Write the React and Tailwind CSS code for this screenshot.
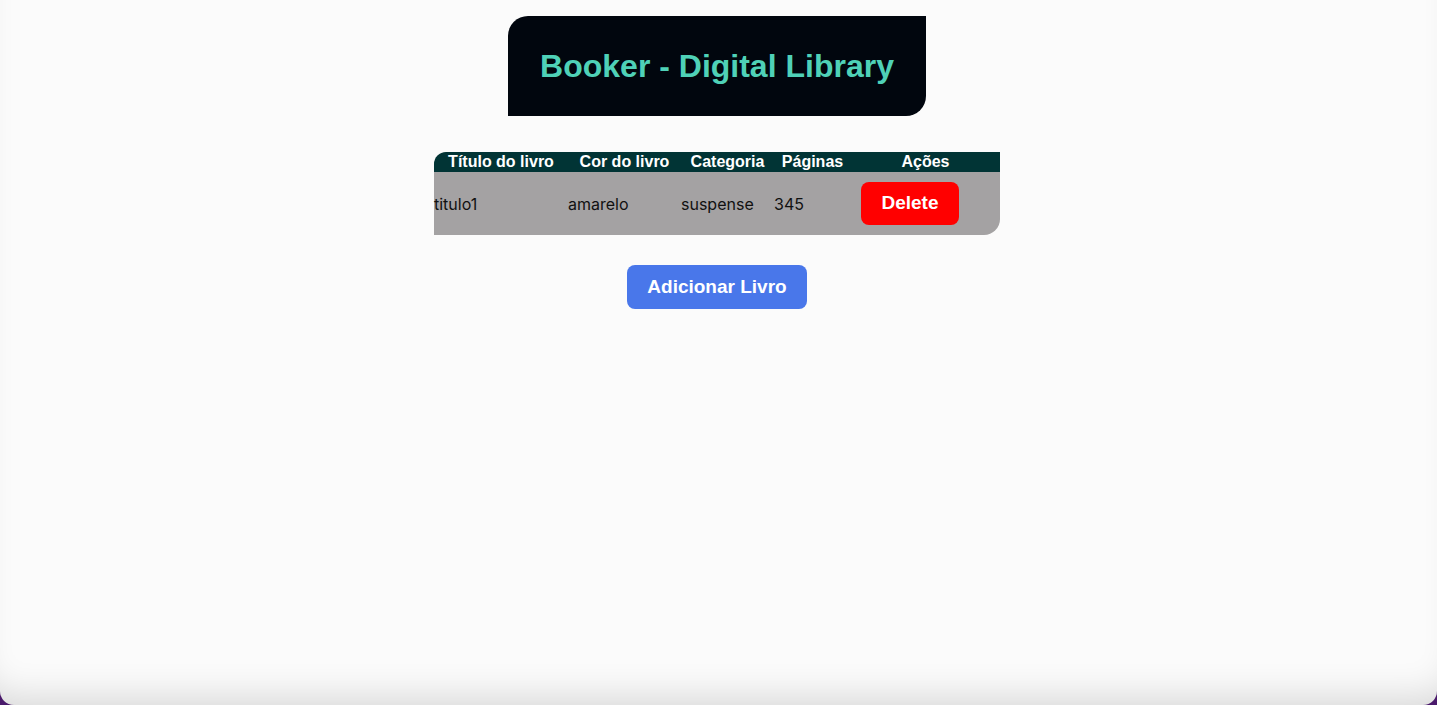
import React from "react";

const books = [
  { titulo: "titulo1", cor: "amarelo", categoria: "suspense", paginas: 345 },
];

const App = () => {
  return (
    <div className="bg-[#4a1a6b] h-[705px] w-full overflow-hidden">
      <div className="h-[705px] w-full bg-[#fbfbfb] rounded-b-[14px] shadow-[inset_0_-30px_36px_-22px_rgba(0,0,0,0.14)] flex flex-col items-center pt-4 pr-[3px]">
        <div className="w-[418px] h-[100px] bg-[#01060e] rounded-tl-[20px] rounded-br-[20px] flex items-center justify-center">
          <h1 className="text-[32px] font-bold text-[#4fd1b7] font-['Liberation_Sans',Arial,sans-serif]">
            Booker - Digital Library
          </h1>
        </div>

        <table className="mt-9 w-[566px] table-fixed border-collapse">
          <thead>
            <tr className="h-5 text-white font-bold text-base leading-5 font-['Liberation_Sans',Arial,sans-serif]">
              <th className="w-[134px] p-0 bg-[#013435] rounded-tl-[12px]">Título do livro</th>
              <th className="w-[113px] p-0 bg-[#013435]">Cor do livro</th>
              <th className="w-[93px] p-0 bg-[#013435]">Categoria</th>
              <th className="w-[77px] p-0 bg-[#013435]">Páginas</th>
              <th className="w-[149px] p-0 bg-[#013435]">Ações</th>
            </tr>
          </thead>
          <tbody>
            {books.map((b) => (
              <tr key={b.titulo} className="text-base text-[#111] font-['Inter',sans-serif]">
                <td className="p-0 bg-[#a4a2a3]">{b.titulo}</td>
                <td className="p-0 bg-[#a4a2a3]">{b.cor}</td>
                <td className="p-0 bg-[#a4a2a3]">{b.categoria}</td>
                <td className="p-0 bg-[#a4a2a3]">{b.paginas}</td>
                <td className="p-0 py-[10px] pl-[10px] bg-[#a4a2a3] rounded-br-[16px]">
                  <button className="w-[98px] h-[43px] bg-[#ff0000] rounded-lg text-white font-bold text-[19px] font-['Liberation_Sans',Arial,sans-serif]">
                    Delete
                  </button>
                </td>
              </tr>
            ))}
          </tbody>
        </table>

        <button className="mt-[30px] w-[180px] h-[44px] bg-[#4977ea] rounded-lg text-white font-bold text-[19px] font-['Liberation_Sans',Arial,sans-serif]">
          Adicionar Livro
        </button>
      </div>
    </div>
  );
};

export default App;
